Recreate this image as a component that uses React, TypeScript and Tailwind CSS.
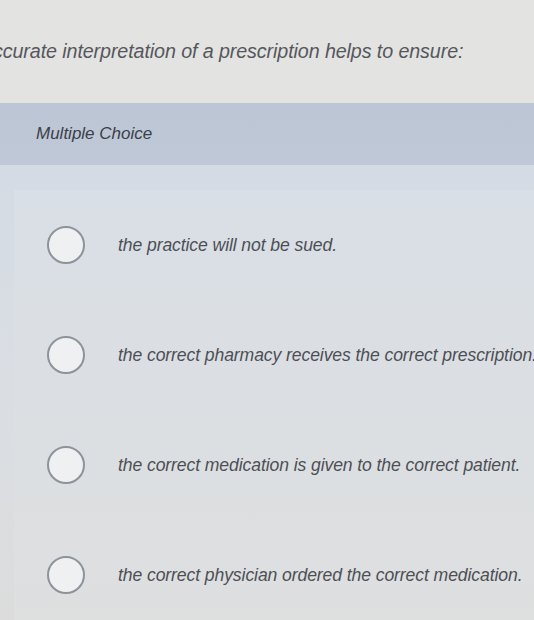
const options = [
  'the practice will not be sued.',
  'the correct pharmacy receives the correct prescription.',
  'the correct medication is given to the correct patient.',
  'the correct physician ordered the correct medication.',
]

export default function App() {
  return (
    <div
      className="h-[620px] w-[534px] overflow-hidden bg-[#e3e3e1] italic text-[#4d4f55]"
      style={{ fontFamily: '"Liberation Sans", Arial, sans-serif' }}
    >
      {/* Question */}
      <div className="flex h-[103px] items-start overflow-hidden whitespace-nowrap pt-[37px]">
        <p className="-ml-[20px] text-[19.7px] tracking-[-0.1px] text-[#55575d]">
          Accurate interpretation of a prescription helps to ensure:
        </p>
      </div>

      {/* Header */}
      <div className="flex h-[62px] items-center bg-gradient-to-b from-[#bcc6d6] to-[#bfc8d6] pl-[36px]">
        <span className="text-[17px] text-[#3c4049]">Multiple Choice</span>
      </div>

      {/* Options */}
      <div className="h-[455px] bg-gradient-to-b from-[#d4dbe4] via-[#dadee3] to-[#dcdcdc] pt-[25px]">
        <div className="ml-[14px] flex flex-col overflow-hidden bg-gradient-to-b from-[#d9dfe6] to-[#dedfdf]">
          {options.map((o) => (
            <div key={o} className="flex h-[110px] items-center whitespace-nowrap">
              <span className="ml-[33px] h-[38px] w-[38px] shrink-0 rounded-full border-[2.5px] border-[#8d939b] bg-[#eef0f2]" />
              <span className="ml-[33px] text-[17.6px] tracking-[-0.1px]">{o}</span>
            </div>
          ))}
        </div>
      </div>
    </div>
  )
}
